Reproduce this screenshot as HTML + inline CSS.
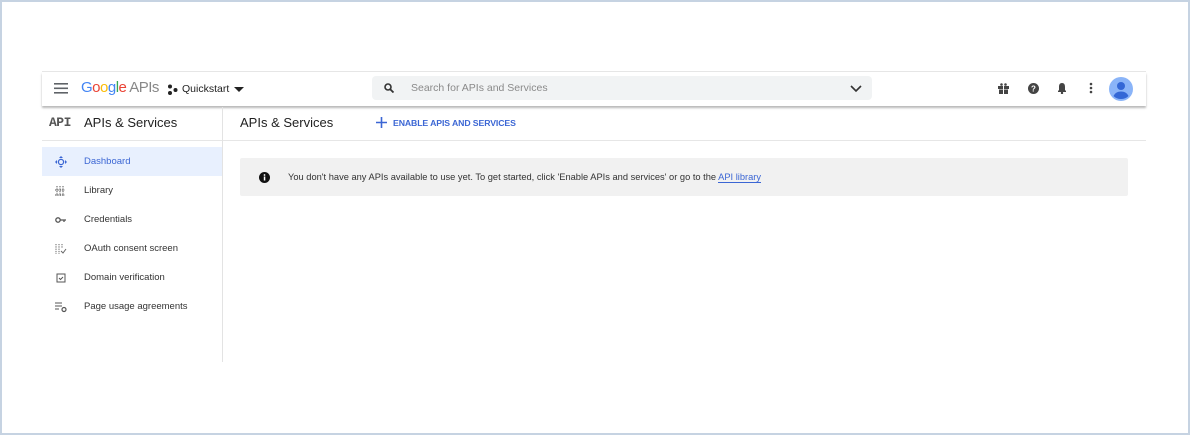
<!DOCTYPE html>
<html><head><style>
*{margin:0;padding:0;box-sizing:border-box}
body{width:1190px;height:435px;background:#fff;font-family:"Liberation Sans",Arial,sans-serif;position:relative;overflow:hidden}
.frame{position:absolute;left:0;top:0;width:1190px;height:435px;border:2px solid #c6d3e2}
.abs{position:absolute}
.topline{left:42px;top:71px;width:1104px;height:1px;background:#e6e6e6}
.header{left:42px;top:72px;width:1104px;height:34px;background:#fff;box-shadow:0 2px 2px rgba(0,0,0,.28)}
.side{left:42px;top:107px;width:181px;height:255px;border-right:1px solid #e3e3e3}
.sub{left:223px;top:140px;width:923px;height:1px;background:#e6e6e6}
.sidesub{left:42px;top:140px;width:180px;height:1px;background:#e6e6e6}
.item{left:42px;width:180px;height:29px;font-size:9.5px;color:#333;line-height:29px;padding-left:42px}
.item .ic{position:absolute;left:13px;top:9px;width:12px;height:12px}
</style></head><body>
<div class="frame"></div>
<div class="abs topline"></div>
<div class="abs header">
  <svg class="abs" style="left:12px;top:11px" width="14" height="11"><rect y="0" width="14" height="1.6" fill="#5f6368"/><rect y="4.5" width="14" height="1.6" fill="#5f6368"/><rect y="9" width="14" height="1.6" fill="#5f6368"/></svg>
  <div class="abs" style="left:39px;top:7px;font-size:15px;letter-spacing:-0.5px"><span style="color:#4285f4">G</span><span style="color:#ea4335">o</span><span style="color:#fbbc05">o</span><span style="color:#4285f4">g</span><span style="color:#34a853">l</span><span style="color:#ea4335">e</span> <span style="color:#888">APIs</span></div>
  <svg class="abs" style="left:125px;top:12px" width="12" height="12"><circle cx="3" cy="2.5" r="2" fill="#222"/><circle cx="3" cy="9" r="2" fill="#222"/><circle cx="8.5" cy="6" r="2" fill="#222"/></svg>
  <div class="abs" style="left:140px;top:11px;font-size:10.5px;color:#222">Quickstart</div>
  <svg class="abs" style="left:192px;top:15px" width="10" height="6"><path d="M0 0h10L5 5z" fill="#222"/></svg>
  <div class="abs" style="left:330px;top:4px;width:500px;height:24px;background:#f1f3f4;border-radius:4px">
    <svg class="abs" style="left:12px;top:7px" width="10" height="10"><circle cx="4" cy="4" r="3" stroke="#333" stroke-width="1.6" fill="none"/><path d="M6.2 6.2L9.5 9.5" stroke="#333" stroke-width="1.8"/></svg>
    <div class="abs" style="left:39px;top:6px;font-size:10.5px;color:#8a8a8a">Search for APIs and Services</div>
    <svg class="abs" style="left:478px;top:9px" width="12" height="8"><path d="M1 1l5 5 5-5" stroke="#333" stroke-width="1.6" fill="none"/></svg>
  </div>
  <svg class="abs" style="left:956px;top:11px" width="11" height="11"><rect x="0" y="3" width="11" height="3" fill="#444"/><rect x="1" y="6.5" width="9" height="4.5" fill="#444"/><rect x="5" y="3" width="1" height="8" fill="#fff"/><circle cx="3.5" cy="1.5" r="1.3" fill="#444"/><circle cx="7.5" cy="1.5" r="1.3" fill="#444"/></svg>
  <svg class="abs" style="left:986px;top:11px" width="11" height="11"><circle cx="5.5" cy="5.5" r="5.5" fill="#444"/><text x="5.5" y="8.5" font-size="8" font-weight="bold" fill="#fff" text-anchor="middle" font-family="Liberation Sans">?</text></svg>
  <svg class="abs" style="left:1015px;top:10px" width="10" height="12"><path d="M5 1C2.5 1 2 3 2 5v3L1 9v1h8V9L8 8V5C8 3 7.5 1 5 1z" fill="#444"/><circle cx="5" cy="11" r="1.2" fill="#444"/></svg>
  <svg class="abs" style="left:1047px;top:10px" width="4" height="12"><circle cx="2" cy="2" r="1.3" fill="#444"/><circle cx="2" cy="6" r="1.3" fill="#444"/><circle cx="2" cy="10" r="1.3" fill="#444"/></svg>
  <svg class="abs" style="left:1067px;top:5px" width="24" height="24"><circle cx="12" cy="12" r="12" fill="#8ab4f8"/><circle cx="12" cy="9" r="4" fill="#3367d6"/><path d="M4.5 19c1.5-3 4-4.5 7.5-4.5s6 1.5 7.5 4.5c-2 2-4.5 3-7.5 3s-5.5-1-7.5-3z" fill="#3367d6"/></svg>
</div>
<div class="abs side"></div>
<div class="abs sidesub"></div>
<div class="abs sub"></div>
<div class="abs" style="left:49px;top:115px;font-family:'Liberation Mono',monospace;font-size:13px;font-weight:bold;color:#555;letter-spacing:-0.5px">API</div>
<div class="abs" style="left:84px;top:115px;font-size:13px;color:#222">APIs &amp; Services</div>
<div class="abs" style="left:240px;top:115px;font-size:13px;color:#222">APIs &amp; Services</div>
<svg class="abs" style="left:376px;top:117px" width="11" height="11"><path d="M5.5 0v11M0 5.5h11" stroke="#3b66d4" stroke-width="1.6"/></svg>
<div class="abs" style="left:393px;top:118px;font-size:8.7px;color:#3b66d4;font-weight:bold;letter-spacing:-0.1px">ENABLE APIS AND SERVICES</div>

<div class="abs item" style="top:147px;background:#e8f0fe;color:#3b66d4"><svg class="ic" viewBox="0 0 12 12"><path d="M6 0l2 2H4zM6 12l2-2H4zM0 6l2 2V4zM12 6l-2 2V4z" fill="#3b66d4"/><circle cx="6" cy="6" r="2.6" fill="none" stroke="#3b66d4" stroke-width="1.3"/></svg>Dashboard</div>
<div class="abs item" style="top:176px"><svg class="ic" viewBox="0 0 12 12"><path d="M2 1v10M5 1v10M8 1v10M0 5h10M0 10h10" stroke="#555" stroke-width="1" stroke-dasharray="1.4 1"/></svg>Library</div>
<div class="abs item" style="top:205px"><svg class="ic" viewBox="0 0 12 12"><circle cx="3" cy="6" r="2.2" fill="none" stroke="#555" stroke-width="1.3"/><path d="M5 6h6M9 6v2" stroke="#555" stroke-width="1.3"/></svg>Credentials</div>
<div class="abs item" style="top:234px"><svg class="ic" viewBox="0 0 12 12"><path d="M1 1v10M4 1v10M7 1v4" stroke="#666" stroke-width="1" stroke-dasharray="1.3 1"/><path d="M6 8l2 2 3-4" stroke="#666" fill="none"/></svg>OAuth consent screen</div>
<div class="abs item" style="top:263px"><svg class="ic" viewBox="0 0 12 12"><rect x="2" y="2" width="8" height="8" fill="none" stroke="#555"/><path d="M4 6l1.5 1.5L8 5" stroke="#555" fill="none"/></svg>Domain verification</div>
<div class="abs item" style="top:292px"><svg class="ic" viewBox="0 0 12 12"><path d="M0 2h7M0 5h7M0 8h4" stroke="#555" stroke-width="1.1"/><circle cx="9" cy="8.5" r="2" fill="none" stroke="#555" stroke-width="1.2"/></svg>Page usage agreements</div>

<div class="abs" style="left:240px;top:158px;width:888px;height:38px;background:#f1f1f1;border-radius:2px">
  <svg class="abs" style="left:19px;top:14px" width="11" height="11"><circle cx="5.5" cy="5.5" r="5.5" fill="#111"/><rect x="4.8" y="4.5" width="1.5" height="4" fill="#fff"/><circle cx="5.5" cy="3" r="0.9" fill="#fff"/></svg>
  <div class="abs" style="left:48px;top:14px;font-size:9.3px;color:#333;white-space:nowrap">You don't have any APIs available to use yet. To get started, click 'Enable APIs and services' or go to the <span style="color:#3b66d4;border-bottom:1px solid #3b66d4">API library</span></div>
</div>
</body></html>
